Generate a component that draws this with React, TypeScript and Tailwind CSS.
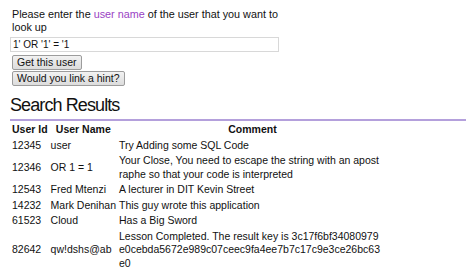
const rows: { id: string; name: string; comment: string[] }[] = [
  { id: '12345', name: 'user', comment: ['Try Adding some SQL Code'] },
  {
    id: '12346',
    name: 'OR 1 = 1',
    comment: ['Your Close, You need to escape the string with an apost', 'raphe so that your code is interpreted'],
  },
  { id: '12543', name: 'Fred Mtenzi', comment: ['A lecturer in DIT Kevin Street'] },
  { id: '14232', name: 'Mark Denihan', comment: ['This guy wrote this application'] },
  { id: '61523', name: 'Cloud', comment: ['Has a Big Sword'] },
  {
    id: '82642',
    name: 'qw!dshs@ab',
    comment: [
      'Lesson Completed. The result key is 3c17f6bf34080979',
      'e0cebda5672e989c07ceec9fa4ee7b7c17c9e3ce26bc63',
      'e0',
    ],
  },
];

export default function App() {
  return (
    <div className="w-[474px] h-[277px] overflow-hidden bg-white text-[#111] font-['Liberation_Sans',Arial,sans-serif]">
      <div className="pl-[10px] pt-[8px]">
        <div className="w-[285px] pl-[2px] text-[10.8px] leading-[13px]">
          Please enter the <span className="text-[#9a3fc4]">user name</span> of the user that you want to look up
        </div>
        <div className="mt-[3px] w-[269px] h-[15px] border border-[#d8d8d8] flex items-center pl-[2px] text-[10px]">
          1' OR '1' = '1
        </div>
        <div className="mt-[3px] flex flex-col items-start gap-[1px] pl-[2px]">
          <button className="h-[15px] px-[4px] whitespace-nowrap border border-[#9c9c9c] rounded-[2px] bg-gradient-to-b from-[#f2f2f2] to-[#dcdcdc] text-[10.5px] leading-[13px] text-[#111]">
            Get this user
          </button>
          <button className="h-[15px] px-[4px] whitespace-nowrap border border-[#9c9c9c] rounded-[2px] bg-gradient-to-b from-[#f2f2f2] to-[#dcdcdc] text-[10.5px] leading-[13px] text-[#111]">
            Would you link a hint?
          </button>
        </div>
        <h2 className="mt-[9px] w-[456px] text-[18px] leading-[21px] tracking-[-0.9px] pb-[3px] border-b-2 border-[#b4a0dc]">
          Search Results
        </h2>
        <table className="mt-[1px] border-collapse text-[10.5px] leading-[13.5px]">
          <thead>
            <tr>
              <th className="pl-[2px] pr-[1px] py-[1px] font-bold">User Id</th>
              <th className="pl-[2px] pr-[1px] py-[1px] font-bold">User Name</th>
              <th className="pl-[2px] pr-[1px] py-[1px] font-bold w-[270px]">Comment</th>
            </tr>
          </thead>
          <tbody>
            {rows.map((r) => (
              <tr key={r.id}>
                <td className="pl-[2px] pr-[1px] py-[1px] align-middle">{r.id}</td>
                <td className="pl-[2px] pr-[1px] py-[1px] align-middle whitespace-nowrap">{r.name}</td>
                <td className="pl-[2px] pr-[1px] py-[1px] align-middle">
                  {r.comment.map((c, i) => (
                    <div key={i}>{c}</div>
                  ))}
                </td>
              </tr>
            ))}
          </tbody>
        </table>
      </div>
    </div>
  );
}
